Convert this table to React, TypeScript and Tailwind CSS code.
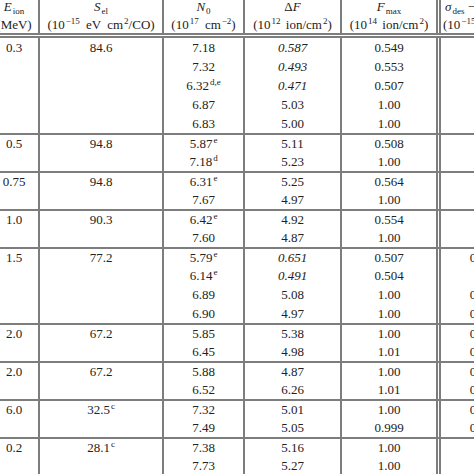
type Row = {
  n: string;
  nSup?: string;
  dF: string;
  dFItalic?: boolean;
  fMax: string;
  sigma?: string;
};

type Group = { e: string; s: string; sSup?: string; rows: Row[] };

// column widths (with the right rule included)
const COLS = [
  "w-[50px] border-r-2",
  "w-[124px] border-r-2",
  "w-[81px] border-r-2",
  "w-[97px] border-r-2",
  "w-[99px] border-r-[5px] border-double",
  "w-[80px]",
];

const groups: Group[] = [
  {
    e: "0.3",
    s: "84.6",
    rows: [
      { n: "7.18", dF: "0.587", dFItalic: true, fMax: "0.549" },
      { n: "7.32", dF: "0.493", dFItalic: true, fMax: "0.553" },
      { n: "6.32", nSup: "d,e", dF: "0.471", dFItalic: true, fMax: "0.507" },
      { n: "6.87", dF: "5.03", fMax: "1.00" },
      { n: "6.83", dF: "5.00", fMax: "1.00" },
    ],
  },
  {
    e: "0.5",
    s: "94.8",
    rows: [
      { n: "5.87", nSup: "e", dF: "5.11", fMax: "0.508" },
      { n: "7.18", nSup: "d", dF: "5.23", fMax: "1.00" },
    ],
  },
  {
    e: "0.75",
    s: "94.8",
    rows: [
      { n: "6.31", nSup: "e", dF: "5.25", fMax: "0.564" },
      { n: "7.67", dF: "4.97", fMax: "1.00" },
    ],
  },
  {
    e: "1.0",
    s: "90.3",
    rows: [
      { n: "6.42", nSup: "e", dF: "4.92", fMax: "0.554" },
      { n: "7.60", dF: "4.87", fMax: "1.00" },
    ],
  },
  {
    e: "1.5",
    s: "77.2",
    rows: [
      { n: "5.79", nSup: "e", dF: "0.651", dFItalic: true, fMax: "0.507", sigma: "0.93" },
      { n: "6.14", nSup: "e", dF: "0.491", dFItalic: true, fMax: "0.504" },
      { n: "6.89", dF: "5.08", fMax: "1.00", sigma: "0.88" },
      { n: "6.90", dF: "4.97", fMax: "1.00", sigma: "0.91" },
    ],
  },
  {
    e: "2.0",
    s: "67.2",
    rows: [
      { n: "5.85", dF: "5.38", fMax: "1.00", sigma: "0.74" },
      { n: "6.45", dF: "4.98", fMax: "1.01", sigma: "0.79" },
    ],
  },
  {
    e: "2.0",
    s: "67.2",
    rows: [
      { n: "5.88", dF: "4.87", fMax: "1.00", sigma: "0.76" },
      { n: "6.52", dF: "6.26", fMax: "1.01", sigma: "0.72" },
    ],
  },
  {
    e: "6.0",
    s: "32.5",
    sSup: "c",
    rows: [
      { n: "7.32", dF: "5.01", fMax: "1.00", sigma: "0.35" },
      { n: "7.49", dF: "5.05", fMax: "0.999", sigma: "0.33" },
    ],
  },
  {
    e: "0.2",
    s: "28.1",
    sSup: "c",
    rows: [
      { n: "7.38", dF: "5.16", fMax: "1.00" },
      { n: "7.73", dF: "5.27", fMax: "1.00" },
    ],
  },
];

function Sup({ children }: { children: React.ReactNode }) {
  return <sup className="relative -top-[5px] ml-[1px] text-[9px] leading-none">{children}</sup>;
}

function Sub({ children }: { children: React.ReactNode }) {
  return <sub className="relative top-[3px] ml-[1px] not-italic text-[9px] leading-none">{children}</sub>;
}

function Cell({ col, children }: { col: number; children?: React.ReactNode }) {
  return (
    <div className={`flex shrink-0 items-center justify-center border-[#7d7d7d] ${COLS[col]}`}>
      <span className="whitespace-nowrap">{children}</span>
    </div>
  );
}

export default function App() {
  return (
    <div
      className="h-[474px] w-[474px] overflow-hidden bg-white text-[13px] text-[#222]"
      style={{ fontFamily: '"Liberation Serif", "DejaVu Serif", serif' }}
    >
      <div className="-ml-[10px] w-[531px]">
        {/* header: two text lines, closed by a double rule */}
        <div className="flex h-[38px] border-b-[5px] border-double border-[#7d7d7d]">
          <div className={`shrink-0 border-[#7d7d7d] ${COLS[0]}`}>
            <div className="-mt-[2px] flex flex-col items-center leading-[18px]">
              <span>
                <i>E</i>
                <Sub>ion</Sub>
              </span>
              <span>(MeV)</span>
            </div>
          </div>
          <div className={`shrink-0 border-[#7d7d7d] ${COLS[1]}`}>
            <div className="-mt-[2px] flex flex-col items-center leading-[18px]">
              <span>
                <i>S</i>
                <Sub>el</Sub>
              </span>
              <span className="whitespace-nowrap [word-spacing:3px]">
                (10<Sup>−15</Sup> eV cm<Sup>2</Sup>/CO)
              </span>
            </div>
          </div>
          <div className={`shrink-0 border-[#7d7d7d] ${COLS[2]}`}>
            <div className="-mt-[2px] flex flex-col items-center leading-[18px]">
              <span>
                <i>N</i>
                <Sub>0</Sub>
              </span>
              <span className="whitespace-nowrap [word-spacing:3px]">
                (10<Sup>17</Sup> cm<Sup>−2</Sup>)
              </span>
            </div>
          </div>
          <div className={`shrink-0 border-[#7d7d7d] ${COLS[3]}`}>
            <div className="-mt-[2px] flex flex-col items-center leading-[18px]">
              <span>
                Δ<i>F</i>
              </span>
              <span className="whitespace-nowrap [word-spacing:2px]">
                (10<Sup>12</Sup> ion/cm<Sup>2</Sup>)
              </span>
            </div>
          </div>
          <div className={`shrink-0 border-[#7d7d7d] ${COLS[4]}`}>
            <div className="-mt-[2px] flex flex-col items-center leading-[18px]">
              <span>
                <i>F</i>
                <Sub>max</Sub>
              </span>
              <span className="whitespace-nowrap [word-spacing:2px]">
                (10<Sup>14</Sup> ion/cm<Sup>2</Sup>)
              </span>
            </div>
          </div>
          <div className={`shrink-0 border-[#7d7d7d] ${COLS[5]}`}>
            <div className="-mt-[2px] flex flex-col leading-[18px]">
              <span className="whitespace-nowrap pl-[4px]">
                <i>σ</i>
                <Sub>des</Sub> − CO
              </span>
              <span className="whitespace-nowrap pl-[2px]">
                (10<Sup>−15</Sup> cm<Sup>2</Sup>)
              </span>
            </div>
          </div>
        </div>

        {groups.map((g, gi) => (
          <div key={gi}>
            {g.rows.map((r, ri) => (
              <div
                key={ri}
                className={`flex h-[19px] border-[#7d7d7d] ${ri === 0 && gi > 0 ? "border-t-2" : ""}`}
              >
                <Cell col={0}>{ri === 0 ? g.e : null}</Cell>
                <Cell col={1}>
                  {ri === 0 ? (
                    <>
                      {g.s}
                      {g.sSup && <Sup>{g.sSup}</Sup>}
                    </>
                  ) : null}
                </Cell>
                <Cell col={2}>
                  {r.n}
                  {r.nSup && <Sup>{r.nSup}</Sup>}
                </Cell>
                <Cell col={3}>{r.dFItalic ? <i>{r.dF}</i> : r.dF}</Cell>
                <Cell col={4}>{r.fMax}</Cell>
                <Cell col={5}>{r.sigma}</Cell>
              </div>
            ))}
          </div>
        ))}
      </div>
    </div>
  );
}
